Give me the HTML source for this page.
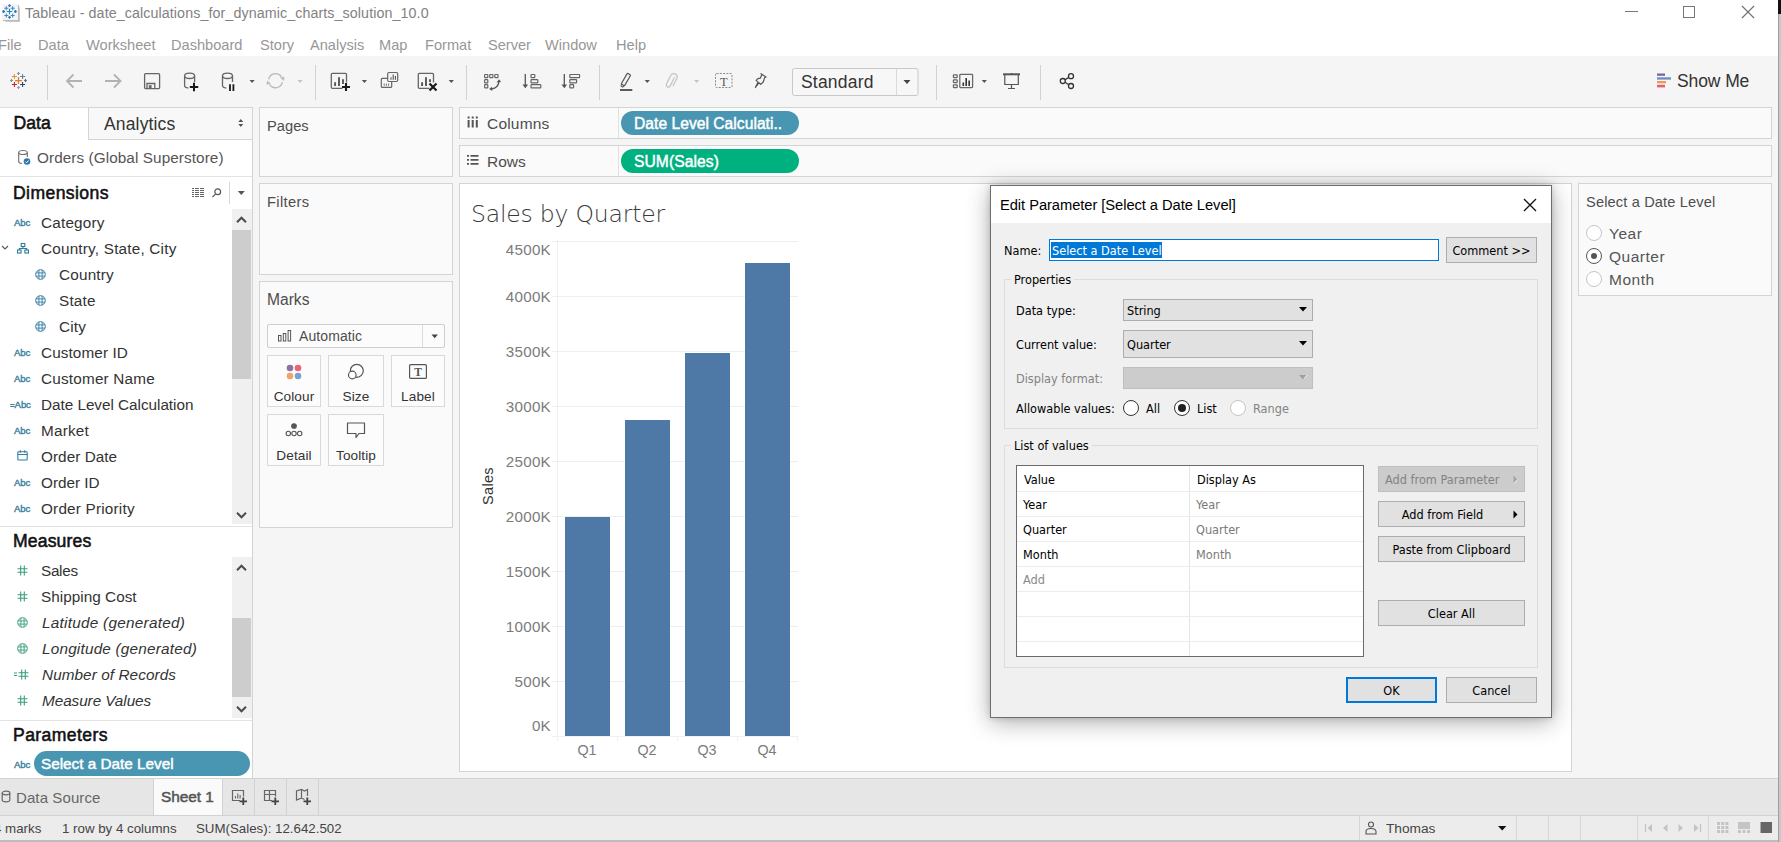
<!DOCTYPE html>
<html lang="en">
<head>
<meta charset="utf-8">
<title>Tableau - date_calculations_for_dynamic_charts_solution_10.0</title>
<style>
*{box-sizing:border-box;margin:0;padding:0}
html,body{width:1781px;height:842px;overflow:hidden;background:#fff}
body{font-family:"Liberation Sans",sans-serif;color:#333;position:relative}
.a{position:absolute}
.t{position:absolute;white-space:nowrap;line-height:20px;height:20px}
.box{position:absolute;background:#fafafa;border:1px solid #d4d4d4}
svg{position:absolute;overflow:visible}
/* menu */
.menu{font-size:14.6px;color:#979797;top:35px}
/* data pane */
.fld{font-size:15.3px;color:#333;letter-spacing:.2px}
.fld.i{font-style:italic;letter-spacing:.3px;margin-left:1px}
.hd{font-size:17.6px;font-weight:normal;color:#111;-webkit-text-stroke:.55px #111;letter-spacing:.4px}
.card{font-size:15px;color:#4d4d4d}
.ax{font-size:15.2px;color:#7b7b7b;letter-spacing:.25px}
/* dialog */
.dlg{font-family:"DejaVu Sans Condensed","DejaVu Sans","Liberation Sans",sans-serif;font-size:12.6px;color:#000}
.btn{position:absolute;background:#e1e1e1;border:1px solid #adadad;text-align:center;font-size:12.6px}
.btn.dis{background:#cccccc;border-color:#bfbfbf;color:#838383}
.cmb{position:absolute;background:#e1e1e1;border:1px solid #adadad}
.grp{position:absolute;border:1px solid #dcdcdc}
.rad{position:absolute;width:16px;height:16px;border-radius:50%;border:1px solid #333;background:#fff}
.rad.on::after{content:"";position:absolute;left:3px;top:3px;width:8px;height:8px;border-radius:50%;background:#222}
.prad{position:absolute;width:16px;height:16px;border-radius:50%;border:1px solid #c6c6c6;background:#fff}
</style>
</head>
<body>
<!-- ===== title bar ===== -->
<div id="titlebar" class="a" style="left:0;top:0;width:1778px;height:56px;background:#fff"></div>
<div class="t" style="left:25px;top:3px;font-size:14.25px;color:#828282;letter-spacing:.1px">Tableau - date_calculations_for_dynamic_charts_solution_10.0</div>
<div class="a" style="left:2px;top:4px;width:16px;height:16px;background:#f4f4f4;box-shadow:1px 1px 0 #b9b9b9,1.5px 1.5px 1px #c9c9c9"></div>
<svg style="left:2px;top:4px" width="16" height="16" viewBox="2 4 16 16" fill="none" stroke="#2f80b8" stroke-width="1.100"><path d="M9.500 8.800v5.400M6.800 11.500h5.400" stroke-width="1.200"/><path d="M6.300 6.300v4M4.300 8.300h4M12.700 6.300v4M10.700 8.300h4M6.300 13.500v4M4.300 15.500h4M12.700 13.500v4M10.700 15.500h4" stroke="#3f8cc2"/><path d="M9.500 4.300v2.800M8.100 5.700h2.800M9.500 16v2.800M8.100 17.400h2.800M3.600 10.100v2.800M2.200 11.500h2.800M15.400 10.100v2.800M14 11.500h2.800" stroke-width="1.300"/></svg>
<!-- ===== menu ===== -->
<div class="t menu" style="left:-2px">File</div>
<div class="t menu" style="left:38px">Data</div>
<div class="t menu" style="left:86px">Worksheet</div>
<div class="t menu" style="left:171px">Dashboard</div>
<div class="t menu" style="left:260px">Story</div>
<div class="t menu" style="left:310px">Analysis</div>
<div class="t menu" style="left:379px">Map</div>
<div class="t menu" style="left:425px">Format</div>
<div class="t menu" style="left:488px">Server</div>
<div class="t menu" style="left:545px">Window</div>
<div class="t menu" style="left:616px">Help</div>
<!-- ===== toolbar + workspace bg ===== -->
<div id="workbg" class="a" style="left:0;top:56px;width:1778px;height:722px;background:#f5f5f5"></div>
<svg id="toolbar" style="left:0;top:57px" width="1778" height="50" viewBox="0 57 1778 50" fill="none" stroke-linecap="butt">
<!-- logo -->
<g stroke-width="1.05">
<path d="M18.500 77v7M15 80.500h7" stroke="#e8762d" stroke-width="1.250"/>
<path d="M14.400 74v5M11.900 76.500h5" stroke="#eb912c"/>
<path d="M22.600 74v5M20.100 76.500h5" stroke="#5b879b"/>
<path d="M14.400 82v5M11.900 84.500h5" stroke="#c72035"/>
<path d="M22.600 82v5M20.100 84.500h5" stroke="#1f447e"/>
<path d="M18.500 72.100v2.800M17.100 73.500h2.800" stroke="#7099a6" stroke-width="1.200"/>
<path d="M18.500 86.100v2.800M17.100 87.500h2.800" stroke="#8d9bb3" stroke-width="1.200"/>
<path d="M11.500 79.100v2.800M10.100 80.500h2.800" stroke="#7099a6" stroke-width="1.200"/>
<path d="M25.500 79.100v2.800M24.100 80.500h2.800" stroke="#5c6692" stroke-width="1.200"/>
</g>
<!-- separators -->
<g stroke="#d2d2d2" stroke-width="1">
<path d="M47.500 65v35M315.500 65v35M466.500 65v35M599.500 65v35M936.500 65v35M1040.500 65v35"/>
</g>
<!-- back / forward -->
<g stroke="#b2b2b2" stroke-width="1.800">
<path d="M67 81h15M73.500 74.500l-6.500 6.500 6.500 6.500"/>
<path d="M105 81h15M114 74.500l6.500 6.500-6.500 6.500"/>
</g>
<!-- save -->
<g stroke="#666" stroke-width="1.300">
<rect x="144.600" y="73.600" width="15" height="15" rx="1"/>
<path d="M147 88.500v-5h7.800v5"/>
<rect x="148.800" y="85.200" width="2.800" height="3.300" fill="#666" stroke="none"/>
</g>
<!-- datasource + -->
<g stroke="#666" stroke-width="1.300">
<ellipse cx="189.600" cy="75.800" rx="5" ry="2.700"/>
<path d="M184.600 75.800v9.700c0 1.300 1.600 2.300 3.800 2.500M194.600 75.800v6.200"/>
<path d="M194 82.800v8.400M189.800 87h8.400" stroke="#1a1a1a" stroke-width="2"/>
</g>
<!-- datasource pause -->
<g stroke="#666" stroke-width="1.300">
<ellipse cx="227.500" cy="75.800" rx="5" ry="2.700"/>
<path d="M222.500 75.800v9.700c0 1.300 1.600 2.300 3.800 2.500M232.500 75.800v6.200"/>
<path d="M230 84.300v6.700M233.400 84.300v6.700" stroke="#1a1a1a" stroke-width="1.800"/>
</g>
<path d="M249.500 80h5.200l-2.600 3z" fill="#555"/>
<!-- refresh disabled -->
<g stroke="#bcbcbc" stroke-width="1.400">
<path d="M268.700 79.300a7 7 0 0 1 12.800-2.400"/>
<path d="M282.300 82.100a7 7 0 0 1 -12.800 2.400"/>
</g>
<path d="M280 77.600l4.500-.9-.6 4.300zM271 83.800l-4.500.9.600-4.300z" fill="#bcbcbc"/>
<path d="M297.500 80h5.200l-2.600 3z" fill="#c4c4c4"/>
<!-- new worksheet -->
<g stroke="#666" stroke-width="1.300">
<path d="M342.500 88.300h-10.200a1 1 0 0 1 -1-1v-13a1 1 0 0 1 1-1h13.200a1 1 0 0 1 1 1v8.200"/>
<path d="M335.100 86v-3.800M339 86v-8.800M343 84v-4.800" stroke="#555" stroke-width="1.900"/>
<path d="M346 83v8M342 87h8" stroke="#1a1a1a" stroke-width="2.100"/>
</g>
<path d="M361.800 80h5.200l-2.600 3z" fill="#555"/>
<!-- duplicate -->
<g stroke="#666" stroke-width="1.200">
<rect x="387.700" y="72.500" width="10" height="9" rx="1.200" />
<path d="M391 79.800v-2.600M393.200 79.800v-5.300M395.400 79.800v-3.800" stroke="#555" stroke-width="1.100"/>
<path d="M387.600 78.400h-5.300a1 1 0 0 0 -1 1v7a1 1 0 0 0 1 1h8.400a1 1 0 0 0 1-1v-4.800"/>
<path d="M384.200 85.800v-2.200M386.400 85.800v-2.200M388.600 85.800v-2.200" stroke="#666" stroke-width=".9"/>
</g>
<!-- clear sheet -->
<g stroke="#666" stroke-width="1.300">
<path d="M429.500 88.300h-10.200a1 1 0 0 1 -1-1v-13a1 1 0 0 1 1-1h13.200a1 1 0 0 1 1 1v8.200"/>
<path d="M422.100 86v-3.800M426 86v-8.800M430 82v-2.800" stroke="#555" stroke-width="1.900"/>
<path d="M429.500 83.500l7 7M436.500 83.500l-7 7" stroke="#1a1a1a" stroke-width="2.200"/>
</g>
<path d="M448.700 80h5.200l-2.600 3z" fill="#555"/>
<!-- swap -->
<g stroke="#666" stroke-width="1.200">
<rect x="484.600" y="74.500" width="3.200" height="3.200" rx=".6"/><rect x="489.700" y="74.500" width="3.200" height="3.200" rx=".6"/><rect x="494.800" y="74.500" width="3.200" height="3.200" rx=".6"/>
<rect x="484.600" y="79.600" width="3.200" height="3.200" rx=".6"/><rect x="484.600" y="84.700" width="3.200" height="3.200" rx=".6"/>
<path d="M491.800 88.800q6.200 -.6 7.100 -7" stroke="#555" stroke-width="1.300"/>
<path d="M499 79.300l2.100 2.700-4.500.6zM489.100 89.100l3-2.400.2 4.300z" fill="#555" stroke="none"/>
</g>
<!-- sort asc -->
<g stroke="#666" stroke-width="1.200">
<path d="M525.300 74v11.500" stroke="#555" stroke-width="1.300"/>
<path d="M522.500 84.400h5.600l-2.800 3.800z" fill="#555" stroke="none"/>
<rect x="531" y="74.500" width="3.800" height="3.200" rx=".6"/><rect x="531" y="79.600" width="6.800" height="3.200" rx=".6"/><rect x="531" y="84.700" width="9.800" height="3.200" rx=".6"/>
</g>
<!-- sort desc -->
<g stroke="#666" stroke-width="1.200">
<path d="M564.300 74v11.500" stroke="#555" stroke-width="1.300"/>
<path d="M561.500 84.400h5.600l-2.800 3.800z" fill="#555" stroke="none"/>
<rect x="569.800" y="74.500" width="9.800" height="3.200" rx=".6"/><rect x="569.800" y="79.600" width="6.800" height="3.200" rx=".6"/><rect x="569.800" y="84.700" width="3.800" height="3.200" rx=".6"/>
</g>
<!-- highlighter -->
<g stroke="#555" stroke-width="1.200" transform="translate(625.900 79.600) rotate(30)">
<rect x="-1.900" y="-6.300" width="3.800" height="12.400" rx=".8"/>
<path d="M-1.500 6.100l.5 2h2l.5-2" stroke-width="1"/>
</g>
<path d="M620 90h12.300" stroke="#4a4a4a" stroke-width="1.800"/>
<path d="M644.700 80h5.200l-2.600 3z" fill="#555"/>
<!-- paperclip disabled -->
<g stroke="#c2c2c2" stroke-width="1.200">
<path d="M674.300 77.500l-4 8.300c-.8 1.600 -2.800 1.600 -3.600 .6 -.7 -.8 -.5 -1.800 0 -2.800l4 -8c1.200 -2.300 3.700 -2.500 5.200 -1.400 1.400 1.100 1.500 2.900 .7 4.500l-3.600 7.200"/>
</g>
<path d="M694 80h5.200l-2.600 3z" fill="#c4c4c4"/>
<!-- T box -->
<rect x="715.500" y="73.500" width="16.500" height="14" rx="1" stroke="#8a8a8a" stroke-width="1" stroke-dasharray="2 1.300"/>
<text x="723.700" y="85.500" font-family="Liberation Serif,serif" font-size="12.500" fill="#555" text-anchor="middle" stroke="none">T</text>
<!-- pin -->
<g stroke="#555" stroke-width="1.200" stroke-linejoin="round">
<path d="M761 73.700l5 3.300 -1.500 .8 -1.200 4.200 -2.600 2.400 -1.800 -1.600 -3.500 4.700 .4 -.9 2.300 -4.500 -2 -1.700 1.800 -1.800 2.400 -.4 1.500 -3.500z"/>
</g>
<!-- Standard combo -->
<rect x="792.500" y="68.500" width="125.500" height="27" rx="2" fill="#f7f7f7" stroke="#c8c8c8" stroke-width="1"/>
<path d="M896.500 69v26" stroke="#dadada"/>
<path d="M903.500 80h7l-3.500 4z" fill="#444"/>
<!-- show cards -->
<g stroke="#666" stroke-width="1.250">
<rect x="953.400" y="74.800" width="3.800" height="2.800" rx=".5"/><rect x="953.400" y="79.800" width="3.800" height="2.800" rx=".5"/><rect x="953.400" y="84.800" width="3.800" height="2.800" rx=".5"/>
<rect x="959.800" y="74.300" width="12.800" height="13.300" rx=".8"/>
<path d="M963.300 86v-3.500M966.200 86v-8M969.200 86v-5.500" stroke="#333" stroke-width="1.600"/>
</g>
<path d="M981.700 80h5.200l-2.600 3z" fill="#555"/>
<!-- presentation -->
<g stroke="#555" stroke-width="1.200">
<path d="M1003 74.300h17" stroke-width="2"/>
<path d="M1004.800 75v9.500h13.500v-9.500M1011.500 73v1.500M1011.500 84.500v4M1008 88.500h7"/>
</g>
<!-- share -->
<g stroke="#333" stroke-width="1.300">
<circle cx="1062.800" cy="81" r="2.500"/><circle cx="1071" cy="76.200" r="2.500"/><circle cx="1071" cy="86" r="2.500"/>
<path d="M1065 79.700l3.800 -2.300M1065 82.300l3.800 2.400"/>
</g>
<!-- show me icon -->
<rect x="1657" y="73.500" width="8" height="2.300" fill="#7b66a0"/>
<rect x="1657" y="77.300" width="14" height="2.300" fill="#6b8fc0"/>
<rect x="1657" y="81" width="9" height="2.300" fill="#f09a4f"/>
<rect x="1657" y="84.800" width="8" height="2.600" fill="#e8606e"/>
</svg>
<div class="t" style="left:801px;top:72px;font-size:17.5px;color:#333;letter-spacing:.2px">Standard</div>
<div class="t" style="left:1677px;top:71px;font-size:17.5px;color:#333;letter-spacing:-.1px">Show Me</div>
<!--/TOOLBAR-->
<!--DATAPANE-->
<div class="a" style="left:0;top:107px;width:252px;height:671px;background:#fff;border-top:1px solid #e0e0e0"></div>
<div class="a" style="left:88px;top:107px;width:165px;height:33px;background:#f8f8f8;border-left:1px solid #d4d4d4;border-bottom:1px solid #d4d4d4;border-top:1px solid #d4d4d4"></div>
<div class="a" style="left:252px;top:107px;width:1px;height:671px;background:#d4d4d4"></div>
<div class="t hd" style="left:13.500px;top:113px;letter-spacing:0">Data</div>
<div class="t" style="left:104px;top:114px;font-size:17.5px;color:#333;letter-spacing:.15px">Analytics</div>
<svg style="left:237px;top:118px" width="8" height="10" viewBox="0 0 8 10"><path d="M1.300 4l2.500-3 2.500 3zM1.300 6l2.500 3 2.500-3z" fill="#555"/></svg>
<svg style="left:17px;top:149px" width="16" height="17" viewBox="0 0 16 17" fill="none" stroke="#6f6f6f" stroke-width="1.100"><ellipse cx="6" cy="3.500" rx="4.300" ry="2"/><path d="M1.700 3.500v9c0 1 1.500 1.800 3.300 2M10.300 3.500v4.500"/><circle cx="10" cy="12.500" r="3.300" fill="#2a7ab0" stroke="none"/><path d="M8.400 12.600l1.200 1.200 2-2.300" stroke="#fff" stroke-width="1"/></svg>
<div class="t fld" style="left:37px;top:148px;color:#555;letter-spacing:.08px">Orders (Global Superstore)</div>
<div class="a" style="left:0;top:176px;width:252px;height:1px;background:#e3e3e3"></div>
<div class="t hd" style="left:13px;top:183px">Dimensions</div>
<svg style="left:192px;top:188px" width="12" height="9" viewBox="0 0 12 9" fill="#666"><rect x="0" y="0" width="2" height="1"/><rect x="3" y="0" width="4" height="1"/><rect x="8" y="0" width="4" height="1"/><rect x="0" y="2" width="2" height="1"/><rect x="3" y="2" width="4" height="1"/><rect x="8" y="2" width="4" height="1"/><rect x="0" y="4" width="2" height="1"/><rect x="3" y="4" width="4" height="1"/><rect x="8" y="4" width="4" height="1"/><rect x="0" y="6" width="2" height="1"/><rect x="3" y="6" width="4" height="1"/><rect x="8" y="6" width="4" height="1"/><rect x="0" y="8" width="2" height="1"/><rect x="3" y="8" width="4" height="1"/><rect x="8" y="8" width="4" height="1"/></svg>
<svg style="left:210.700px;top:186.700px" width="12" height="12" viewBox="0 0 12 12" stroke="#555" stroke-width="1.200" fill="none"><circle cx="6.700" cy="4.800" r="2.900"/><path d="M4.600 6.900l-3.200 3.300"/></svg>
<div class="a" style="left:229px;top:182px;width:1px;height:22px;background:#d8d8d8"></div>
<svg style="left:237px;top:190px" width="9" height="6" viewBox="0 0 9 6"><path d="M.800 1h7l-3.500 4z" fill="#555"/></svg>
<div class="t" style="left:14px;top:213px;font-size:9.600px;font-weight:normal;color:#3b7f9e;-webkit-text-stroke:.4px #3b7f9e;letter-spacing:-.1px;transform:scaleY(1)">Abc</div>
<div class="t fld" style="left:41px;top:213px">Category</div>
<svg style="left:1.300px;top:245.300px" width="8" height="6" viewBox="0 0 8 6" fill="none" stroke="#555" stroke-width="1.100"><path d="M1 1l3 3 3-3"/></svg>
<svg style="left:16.600px;top:243px" width="12" height="11" viewBox="0 0 12 11" fill="none" stroke="#2f7c9f" stroke-width="1.100"><rect x="4.200" y=".5" width="3.600" height="3"/><rect x=".5" y="7" width="3.600" height="3"/><rect x="7.900" y="7" width="3.600" height="3"/><path d="M6 3.500v2M2.300 7v-1.500h7.400v1.500"/></svg>
<div class="t fld" style="left:41px;top:239px">Country, State, City</div>
<svg style="left:35px;top:269px" width="11" height="11" viewBox="0 0 11 11" fill="none" stroke="#2f7c9f" stroke-width="1"><circle cx="5.500" cy="5.500" r="4.800"/><path d="M3.900 1.100v8.800M7.100 1.100v8.800M1.100 3.900h8.800M1.100 7.100h8.800" stroke-width=".9"/></svg>
<div class="t fld" style="left:59px;top:265px">Country</div>
<svg style="left:35px;top:295px" width="11" height="11" viewBox="0 0 11 11" fill="none" stroke="#2f7c9f" stroke-width="1"><circle cx="5.500" cy="5.500" r="4.800"/><path d="M3.900 1.100v8.800M7.100 1.100v8.800M1.100 3.900h8.800M1.100 7.100h8.800" stroke-width=".9"/></svg>
<div class="t fld" style="left:59px;top:291px">State</div>
<svg style="left:35px;top:321px" width="11" height="11" viewBox="0 0 11 11" fill="none" stroke="#2f7c9f" stroke-width="1"><circle cx="5.500" cy="5.500" r="4.800"/><path d="M3.900 1.100v8.800M7.100 1.100v8.800M1.100 3.900h8.800M1.100 7.100h8.800" stroke-width=".9"/></svg>
<div class="t fld" style="left:59px;top:317px">City</div>
<div class="t" style="left:14px;top:343px;font-size:9.600px;font-weight:normal;color:#3b7f9e;-webkit-text-stroke:.4px #3b7f9e;letter-spacing:-.1px;transform:scaleY(1)">Abc</div>
<div class="t fld" style="left:41px;top:343px;letter-spacing:.1px">Customer ID</div>
<div class="t" style="left:14px;top:369px;font-size:9.600px;font-weight:normal;color:#3b7f9e;-webkit-text-stroke:.4px #3b7f9e;letter-spacing:-.1px;transform:scaleY(1)">Abc</div>
<div class="t fld" style="left:41px;top:369px">Customer Name</div>
<div class="t" style="left:10px;top:395px;font-size:9.600px;font-weight:normal;color:#3b7f9e;-webkit-text-stroke:.4px #3b7f9e;letter-spacing:-.1px;transform:scaleY(1)"><span style="font-size:8px">=</span>Abc</div>
<div class="t fld" style="left:41px;top:395px;letter-spacing:-.03px">Date Level Calculation</div>
<div class="t" style="left:14px;top:421px;font-size:9.600px;font-weight:normal;color:#3b7f9e;-webkit-text-stroke:.4px #3b7f9e;letter-spacing:-.1px;transform:scaleY(1)">Abc</div>
<div class="t fld" style="left:41px;top:421px">Market</div>
<svg style="left:17px;top:450px" width="11" height="11" viewBox="0 0 11 11" fill="none" stroke="#2f7c9f" stroke-width="1.100"><rect x=".800" y="1.800" width="9.400" height="8.200" rx=".8"/><path d="M.800 4.500h9.400M3.300 .3v2.500M7.700 .3v2.500"/></svg>
<div class="t fld" style="left:41px;top:447px;letter-spacing:.05px">Order Date</div>
<div class="t" style="left:14px;top:473px;font-size:9.600px;font-weight:normal;color:#3b7f9e;-webkit-text-stroke:.4px #3b7f9e;letter-spacing:-.1px;transform:scaleY(1)">Abc</div>
<div class="t fld" style="left:41px;top:473px;letter-spacing:0px">Order ID</div>
<div class="t" style="left:14px;top:499px;font-size:9.600px;font-weight:normal;color:#3b7f9e;-webkit-text-stroke:.4px #3b7f9e;letter-spacing:-.1px;transform:scaleY(1)">Abc</div>
<div class="t fld" style="left:41px;top:499px">Order Priority</div>
<div class="a" style="left:232px;top:209px;width:20px;height:315px;background:#f0f0f0"></div>
<div class="a" style="left:232px;top:230px;width:19px;height:149px;background:#cdcdcd"></div>
<svg style="left:236px;top:216px" width="11" height="7" viewBox="0 0 11 7" fill="none" stroke="#4a4a4a" stroke-width="2"><path d="M1 6.200l4.500-4.500 4.500 4.500"/></svg>
<svg style="left:236px;top:512px" width="11" height="7" viewBox="0 0 11 7" fill="none" stroke="#4a4a4a" stroke-width="2"><path d="M1 .8l4.500 4.500 4.500-4.500"/></svg>
<div class="a" style="left:0;top:526px;width:252px;height:1px;background:#e3e3e3"></div>
<div class="t hd" style="left:13px;top:531px;letter-spacing:.15px">Measures</div>
<svg style="left:17px;top:565px" width="11" height="11" viewBox="0 0 11 11" fill="none" stroke="#3a9e7a" stroke-width="1.100"><path d="M3.700 .5v10M7.300 .5v10M.5 3.700h10M.5 7.300h10"/></svg>
<div class="t fld" style="left:41px;top:561px;letter-spacing:-.3px">Sales</div>
<svg style="left:17px;top:591px" width="11" height="11" viewBox="0 0 11 11" fill="none" stroke="#3a9e7a" stroke-width="1.100"><path d="M3.700 .5v10M7.300 .5v10M.5 3.700h10M.5 7.300h10"/></svg>
<div class="t fld" style="left:41px;top:587px;letter-spacing:.03px">Shipping Cost</div>
<svg style="left:17px;top:617px" width="11" height="11" viewBox="0 0 11 11" fill="none" stroke="#3a9e7a" stroke-width="1"><circle cx="5.500" cy="5.500" r="4.800"/><path d="M3.900 1.100v8.800M7.100 1.100v8.800M1.100 3.900h8.800M1.100 7.100h8.800" stroke-width=".9"/></svg>
<div class="t fld i" style="left:41px;top:613px;letter-spacing:.27px">Latitude (generated)</div>
<svg style="left:17px;top:643px" width="11" height="11" viewBox="0 0 11 11" fill="none" stroke="#3a9e7a" stroke-width="1"><circle cx="5.500" cy="5.500" r="4.800"/><path d="M3.900 1.100v8.800M7.100 1.100v8.800M1.100 3.900h8.800M1.100 7.100h8.800" stroke-width=".9"/></svg>
<div class="t fld i" style="left:41px;top:639px;letter-spacing:.21px">Longitude (generated)</div>
<svg style="left:18px;top:669px" width="11" height="11" viewBox="0 0 11 11" fill="none" stroke="#3a9e7a" stroke-width="1.100"><path d="M3.700 .5v10M7.300 .5v10M.5 3.700h10M.5 7.300h10"/></svg><svg style="left:14px;top:672px" width="4" height="5" viewBox="0 0 4 5" stroke="#3a9e7a" stroke-width="1"><path d="M0 1h3M0 3.500h3"/></svg>
<div class="t fld i" style="left:41px;top:665px;letter-spacing:.08px">Number of Records</div>
<svg style="left:17px;top:695px" width="11" height="11" viewBox="0 0 11 11" fill="none" stroke="#3a9e7a" stroke-width="1.100"><path d="M3.700 .5v10M7.300 .5v10M.5 3.700h10M.5 7.300h10"/></svg>
<div class="t fld i" style="left:41px;top:691px;letter-spacing:-.06px">Measure Values</div>
<div class="a" style="left:232px;top:557px;width:20px;height:161px;background:#f0f0f0"></div>
<div class="a" style="left:232px;top:618px;width:19px;height:79px;background:#cdcdcd"></div>
<svg style="left:236px;top:564px" width="11" height="7" viewBox="0 0 11 7" fill="none" stroke="#4a4a4a" stroke-width="2"><path d="M1 6.200l4.500-4.500 4.500 4.500"/></svg>
<svg style="left:236px;top:706px" width="11" height="7" viewBox="0 0 11 7" fill="none" stroke="#4a4a4a" stroke-width="2"><path d="M1 .8l4.500 4.500 4.500-4.500"/></svg>
<div class="a" style="left:0;top:720px;width:252px;height:1px;background:#e3e3e3"></div>
<div class="t hd" style="left:13px;top:725px">Parameters</div>
<div class="t" style="left:14px;top:755px;font-size:9.600px;font-weight:normal;color:#3b7f9e;-webkit-text-stroke:.4px #3b7f9e;letter-spacing:-.1px;transform:scaleY(1)">Abc</div>
<div class="a" style="left:34px;top:751px;width:216px;height:25px;border-radius:12.500px;background:#4996b2"></div>
<div class="t" style="left:41px;top:754px;font-size:15.3px;font-weight:normal;-webkit-text-stroke:.45px #fff;color:#fff;letter-spacing:0">Select a Date Level</div>
<!--/DATAPANE-->
<!--CARDS-->
<div class="box" style="left:259px;top:107px;width:194px;height:70px"></div>
<div class="t card" style="left:267px;top:116px;font-size:14.7px">Pages</div>
<div class="box" style="left:259px;top:183px;width:194px;height:92px"></div>
<div class="t card" style="left:267px;top:192px;font-size:14.7px;letter-spacing:.35px">Filters</div>
<div class="box" style="left:259px;top:281px;width:194px;height:247px"></div>
<div class="t card" style="left:267px;top:290px;font-size:15.6px">Marks</div>
<!-- mark type dropdown -->
<div class="a" style="left:267px;top:324px;width:178px;height:24px;background:#fcfcfc;border:1px solid #cfcfcf;border-radius:2px"></div>
<div class="a" style="left:422px;top:325px;width:1px;height:22px;background:#dcdcdc"></div>
<svg style="left:431px;top:334px" width="8" height="5" viewBox="0 0 8 5"><path d="M.500 .5h6.400l-3.200 3.800z" fill="#444"/></svg>
<svg style="left:278px;top:330px" width="14" height="12" viewBox="0 0 14 12" fill="none" stroke="#555" stroke-width="1"><rect x=".5" y="5.500" width="2.500" height="5.500"/><rect x="5.300" y="3.500" width="2.500" height="7.500"/><rect x="10.100" y=".5" width="2.500" height="10.500"/></svg>
<div class="t" style="left:299px;top:326px;font-size:14px;color:#4d4d4d;letter-spacing:.1px">Automatic</div>
<!-- mark buttons -->
<div class="a mb" style="left:267px;top:355px;width:54px;height:52px"></div>
<div class="a mb" style="left:328px;top:355px;width:56px;height:52px"></div>
<div class="a mb" style="left:391px;top:355px;width:54px;height:52px"></div>
<div class="a mb" style="left:267px;top:414px;width:54px;height:52px"></div>
<div class="a mb" style="left:328px;top:414px;width:56px;height:52px"></div>
<style>.mb{background:#fcfcfc;border:1px solid #d9d9d9}.ml{font-size:13.6px;letter-spacing:.1px;color:#333;text-align:center}</style>
<div class="t ml" style="left:267px;top:387px;width:54px">Colour</div>
<div class="t ml" style="left:328px;top:387px;width:56px">Size</div>
<div class="t ml" style="left:391px;top:387px;width:54px">Label</div>
<div class="t ml" style="left:267px;top:446px;width:54px">Detail</div>
<div class="t ml" style="left:328px;top:446px;width:56px">Tooltip</div>
<!-- colour icon -->
<svg style="left:285px;top:363px" width="18" height="18" viewBox="0 0 18 18"><circle cx="5" cy="5" r="3.300" fill="#8874a6"/><circle cx="13" cy="5" r="3.300" fill="#ee6275"/><circle cx="5" cy="13" r="3.300" fill="#f3a26c"/><circle cx="13" cy="13" r="3.300" fill="#79a1d0"/></svg>
<!-- size icon -->
<svg style="left:346px;top:362px" width="20" height="20" viewBox="0 0 20 20" fill="none" stroke="#555" stroke-width="1.200"><circle cx="10.800" cy="8.800" r="6.500"/><circle cx="6.300" cy="13" r="3.800" fill="#fff"/></svg>
<!-- label icon -->
<svg style="left:409px;top:364px" width="18" height="15" viewBox="0 0 18 15" fill="none" stroke="#555" stroke-width="1.200"><rect x=".600" y=".600" width="16.800" height="13.800" rx="1"/><text x="9" y="12" font-family="Liberation Serif,serif" font-weight="bold" font-size="11.500" fill="#555" stroke="none" text-anchor="middle">T</text></svg>
<!-- detail icon -->
<svg style="left:285px;top:423px" width="18" height="14" viewBox="0 0 18 14" fill="none" stroke="#555" stroke-width="1.100"><circle cx="9" cy="3" r="2.300" fill="#555"/><circle cx="3.300" cy="10.500" r="2.200"/><circle cx="9" cy="10.500" r="2.200"/><circle cx="14.700" cy="10.500" r="2.200"/></svg>
<!-- tooltip icon -->
<svg style="left:346px;top:422px" width="20" height="18" viewBox="0 0 20 18" fill="none" stroke="#555" stroke-width="1.200" stroke-linejoin="round"><path d="M1.500 1h17v10.500h-5.500l-3 4v-4h-8.500z"/></svg>
<!-- shelves -->
<div class="box" style="left:459px;top:107px;width:1313px;height:32px"></div>
<div class="box" style="left:459px;top:145px;width:1313px;height:32px"></div>
<div class="a" style="left:618px;top:108px;width:1px;height:30px;background:#e0e0e0"></div>
<div class="a" style="left:618px;top:146px;width:1px;height:30px;background:#e0e0e0"></div>
<svg style="left:467px;top:116px" width="12" height="12" viewBox="0 0 12 12" stroke="#555" stroke-width="2" fill="none"><path d="M1.600 4v7.500M5.700 4v7.500M9.800 4v7.500"/><path d="M1.600 .5v2M5.700 .5v2M9.800 .5v2"/></svg>
<svg style="left:467px;top:154px" width="12" height="12" viewBox="0 0 12 12" stroke="#555" stroke-width="1.700" fill="none"><path d="M3.500 1.800h8M3.500 5.800h8M3.500 9.800h8"/><path d="M0 1.800h2M0 5.800h2M0 9.800h2"/></svg>
<div class="t card" style="left:487px;top:114px;font-size:15.500px;letter-spacing:.2px">Columns</div>
<div class="t card" style="left:487px;top:152px;font-size:15.500px;letter-spacing:0">Rows</div>
<div class="a" style="left:621px;top:111px;width:178px;height:24px;border-radius:12px;background:#4996b2"></div>
<div class="a" style="left:621px;top:149px;width:178px;height:24px;border-radius:12px;background:#00b180"></div>
<div class="t" style="left:634px;top:114px;font-size:15.6px;font-weight:normal;-webkit-text-stroke:.45px #fff;color:#fff;letter-spacing:.04px">Date Level Calculati..</div>
<div class="t" style="left:634px;top:152px;font-size:15.6px;font-weight:normal;-webkit-text-stroke:.45px #fff;color:#fff;letter-spacing:.1px">SUM(Sales)</div>
<!-- parameter control card -->
<div class="box" style="left:1578px;top:183px;width:194px;height:113px"></div>
<div class="t" style="left:1586px;top:192px;font-size:14.6px;color:#4d4d4d;letter-spacing:.15px">Select a Date Level</div>
<div class="prad" style="left:1586px;top:225px"></div>
<div class="prad" style="left:1586px;top:248px;border-color:#555;border-width:1.500px"></div>
<div class="a" style="left:1591px;top:253px;width:6px;height:6px;border-radius:50%;background:#555"></div>
<div class="prad" style="left:1586px;top:271px"></div>
<div class="t" style="left:1609px;top:224px;font-size:15.500px;color:#555;letter-spacing:.5px">Year</div>
<div class="t" style="left:1609px;top:247px;font-size:15.500px;color:#555;letter-spacing:.5px">Quarter</div>
<div class="t" style="left:1609px;top:270px;font-size:15.500px;color:#555;letter-spacing:.5px">Month</div>
<!--/CARDS-->
<!--VIEW-->
<div class="a" style="left:459px;top:183px;width:1113px;height:589px;background:#fff;border:1px solid #d4d4d4"></div>
<div class="t" style="left:471px;top:198px;height:32px;line-height:32px;font-family:'DejaVu Sans Light','DejaVu Sans','Liberation Sans',sans-serif;font-weight:200;font-size:23.500px;color:#3a3a3a;letter-spacing:-.2px">Sales by Quarter</div>
<svg style="left:459px;top:183px" width="1113" height="589" viewBox="459 183 1113 589">
<g stroke="#efefef" stroke-width="1">
<path d="M552 241.500h246M552 296.500h246M552 351.500h246M552 406.500h246M552 461.500h246M552 516.500h246M552 571.500h246M552 626.500h246M552 681.500h246"/>
<path d="M557.500 239v502M617.500 736v5M677.500 736v5M737.500 736v5M797.500 736v5M552 736.500h246" stroke="#f0f0f0"/>
</g>
<g fill="#4e79a7">
<rect x="565" y="517" width="45" height="219"/>
<rect x="625" y="420" width="45" height="316"/>
<rect x="685" y="353" width="45" height="383"/>
<rect x="745" y="263" width="45" height="473"/>
</g>
</svg>
<style>.yl{width:60px;text-align:right;left:491px}.xl{width:60px;text-align:center;font-size:14.3px;letter-spacing:0}</style>
<div class="t ax yl" style="top:240px">4500K</div>
<div class="t ax yl" style="top:287px">4000K</div>
<div class="t ax yl" style="top:342px">3500K</div>
<div class="t ax yl" style="top:397px">3000K</div>
<div class="t ax yl" style="top:452px">2500K</div>
<div class="t ax yl" style="top:507px">2000K</div>
<div class="t ax yl" style="top:562px">1500K</div>
<div class="t ax yl" style="top:617px">1000K</div>
<div class="t ax yl" style="top:672px">500K</div>
<div class="t ax yl" style="top:716px">0K</div>
<div class="t ax xl" style="left:557px;top:740px">Q1</div>
<div class="t ax xl" style="left:617px;top:740px">Q2</div>
<div class="t ax xl" style="left:677px;top:740px">Q3</div>
<div class="t ax xl" style="left:737px;top:740px">Q4</div>
<div class="t" style="left:458px;top:476px;width:60px;text-align:center;font-size:14.500px;color:#333;letter-spacing:.3px;transform:rotate(-90deg)">Sales</div>
<!--/VIEW-->
<!--BOTTOM-->
<div class="a" style="left:0;top:778px;width:1778px;height:38px;background:#e6e6e6;border-top:1px solid #d2d2d2;border-bottom:1px solid #d2d2d2"></div>
<div class="a" style="left:153px;top:779px;width:70px;height:36px;background:#fafafa;border-left:1px solid #d2d2d2;border-right:1px solid #d2d2d2"></div>
<div class="a" style="left:254px;top:779px;width:1px;height:36px;background:#d2d2d2"></div>
<div class="a" style="left:286px;top:779px;width:1px;height:36px;background:#d2d2d2"></div>
<div class="a" style="left:318px;top:779px;width:1px;height:36px;background:#d2d2d2"></div>
<svg style="left:1px;top:790px" width="10" height="13" viewBox="0 0 10 13" fill="none" stroke="#666" stroke-width="1.200"><ellipse cx="5" cy="3" rx="3.800" ry="1.800"/><path d="M1.200 3v7c0 1 1.700 1.800 3.800 1.800s3.800-.8 3.800-1.800v-7"/></svg>
<div class="t" style="left:16px;top:788px;font-size:15px;color:#666;letter-spacing:.1px">Data Source</div>
<div class="t" style="left:161px;top:787px;font-size:15.4px;font-weight:normal;-webkit-text-stroke:.5px #555;color:#555;letter-spacing:-.05px">Sheet 1</div>
<svg style="left:231px;top:789px" width="17" height="17" viewBox="0 0 17 17" fill="none" stroke="#666" stroke-width="1.200"><path d="M9 11.500h-7.500v-10h11v6"/><path d="M4.500 9.500v-2.500M6.800 9.500v-5M9.100 9.500v-3.500" stroke-width="1.100"/><path d="M12.300 8.500v7.500M8.500 12.300h7.500" stroke="#444" stroke-width="1.800"/></svg>
<svg style="left:263px;top:789px" width="17" height="17" viewBox="0 0 17 17" fill="none" stroke="#666" stroke-width="1.200"><path d="M9 11.500h-7.500v-10h11v6M1.500 5.500h11M6.500 1.500v10"/><path d="M12.300 8.500v7.500M8.500 12.300h7.500" stroke="#444" stroke-width="1.800"/></svg>
<svg style="left:295px;top:789px" width="17" height="17" viewBox="0 0 17 17" fill="none" stroke="#666" stroke-width="1.200"><path d="M9.500 10.500l-3-1.500-5 2v-9l5-1.500 3 1.500 3-1.500v6.500M6.500 .5v8.500"/><path d="M12.300 8.500v7.500M8.500 12.300h7.500" stroke="#444" stroke-width="1.800"/></svg>
<!-- status bar -->
<div class="a" style="left:0;top:816px;width:1778px;height:25px;background:#ececec"></div>
<div class="a" style="left:0;top:840px;width:1778px;height:2px;background:#bdbdbd"></div>
<div class="t sb" style="left:-6px;top:819px">4 marks</div>
<div class="t sb" style="left:62px;top:819px">1 row by 4 columns</div>
<div class="t sb" style="left:196px;top:819px">SUM(Sales): 12.642.502</div>
<style>.sb{font-size:13.3px;color:#444}.vs{position:absolute;top:816px;width:1px;height:24px;background:#d6d6d6}</style>
<div class="vs" style="left:1359px"></div><div class="vs" style="left:1516px"></div><div class="vs" style="left:1548px"></div><div class="vs" style="left:1580px"></div><div class="vs" style="left:1637px"></div><div class="vs" style="left:1708px"></div>
<svg style="left:1365px;top:821px" width="12" height="14" viewBox="0 0 12 14" fill="none" stroke="#555" stroke-width="1.100"><circle cx="6" cy="3.500" r="2.500"/><path d="M1 13v-2.500c0-2 2-3 5-3s5 1 5 3v2.500z"/></svg>
<div class="t sb" style="left:1386px;top:819px;font-size:13.7px">Thomas</div>
<svg style="left:1498px;top:826px" width="9" height="5" viewBox="0 0 9 5"><path d="M0 0h8.400l-4.200 4.600z" fill="#111"/></svg>
<svg style="left:1644px;top:822px" width="60" height="12" viewBox="1644 822 60 12" fill="#c3c3c3" stroke="#c3c3c3" stroke-width="1.200"><path d="M1645.500 824v8" fill="none"/><path d="M1652 824v8l-4.500-4z" stroke="none"/><path d="M1667.500 824v8l-4.500-4z" stroke="none"/><path d="M1678.500 824v8l4.500-4z" stroke="none"/><path d="M1694 824v8l4.500-4z" stroke="none"/><path d="M1700.500 824v8" fill="none"/></svg>
<svg style="left:1717px;top:822px" width="56" height="11" viewBox="1717 822 56 11"><g fill="#c4c4c4"><rect x="1717" y="822" width="3" height="3"/><rect x="1721.200" y="822" width="3" height="3"/><rect x="1725.400" y="822" width="3" height="3"/><rect x="1717" y="826" width="3" height="3"/><rect x="1721.200" y="826" width="3" height="3"/><rect x="1725.400" y="826" width="3" height="3"/><rect x="1717" y="830" width="3" height="3"/><rect x="1721.200" y="830" width="3" height="3"/><rect x="1725.400" y="830" width="3" height="3"/>
<rect x="1738" y="822" width="12" height="7"/><rect x="1738" y="830" width="3" height="3"/><rect x="1742.500" y="830" width="3" height="3"/><rect x="1747" y="830" width="3" height="3"/></g><rect x="1760.500" y="822" width="11.500" height="11" fill="#666"/></svg>
<!--/BOTTOM-->
<!--DIALOG-->
<div id="dlg" class="a dlg" style="left:990px;top:185px;width:562px;height:533px;background:#f0f0f0;border:1px solid #6d6d6d;box-shadow:0 4px 22px rgba(0,0,0,.32),0 0 6px rgba(0,0,0,.16)">
<div class="a" style="left:0;top:0;width:560px;height:37px;background:#fff"></div>
<div class="t" style="left:9px;top:9px;font-family:'Liberation Sans',sans-serif;font-size:14.7px;color:#000;letter-spacing:-.05px">Edit Parameter [Select a Date Level]</div>
<svg style="left:532px;top:12px" width="14" height="14" viewBox="0 0 14 14" stroke="#111" stroke-width="1.300" fill="none"><path d="M1 1l12 12M13 1l-12 12"/></svg>
<div class="t" style="left:13px;top:55px">Name:</div>
<div class="a" style="left:58px;top:53px;width:390px;height:22px;background:#fff;border:1px solid #0078d7"></div>
<div class="a" style="left:60px;top:56px;width:111px;height:16px;background:#0078d7"></div>
<div class="t" style="left:61px;top:55px;color:#fff">Select a Date Level</div>
<div class="btn" style="left:455px;top:51px;width:91px;height:26px;line-height:26px">Comment &gt;&gt;</div>
<!-- properties -->
<div class="grp" style="left:13px;top:93px;width:534px;height:150px"></div>
<div class="t" style="left:20px;top:84px;background:#f0f0f0;padding:0 3px">Properties</div>
<div class="t" style="left:25px;top:115px">Data type:</div>
<div class="cmb" style="left:132px;top:113px;width:190px;height:22px"></div>
<div class="t" style="left:136px;top:115px">String</div>
<svg style="left:308px;top:121px" width="9" height="5" viewBox="0 0 9 5"><path d="M0 0h8l-4 4.500z" fill="#000"/></svg>
<div class="t" style="left:25px;top:149px">Current value:</div>
<div class="cmb" style="left:132px;top:144px;width:190px;height:28px"></div>
<div class="t" style="left:136px;top:149px">Quarter</div>
<svg style="left:308px;top:155px" width="9" height="5" viewBox="0 0 9 5"><path d="M0 0h8l-4 4.500z" fill="#000"/></svg>
<div class="t" style="left:25px;top:183px;color:#838383">Display format:</div>
<div class="cmb" style="left:132px;top:181px;width:190px;height:22px;background:#cccccc;border-color:#bfbfbf"></div>
<svg style="left:308px;top:189px" width="9" height="5" viewBox="0 0 9 5"><path d="M0 0h8l-4 4.500z" fill="#a0a0a0"/><path d="M5 3.500l3-3.500" stroke="#fff" stroke-width=".8"/></svg>
<div class="t" style="left:25px;top:213px">Allowable values:</div>
<div class="rad" style="left:132px;top:214px"></div>
<div class="t" style="left:155px;top:213px">All</div>
<div class="rad on" style="left:183px;top:214px"></div>
<div class="t" style="left:206px;top:213px">List</div>
<div class="rad" style="left:239px;top:214px;border-color:#c4c4c4"></div>
<div class="t" style="left:262px;top:213px;color:#838383">Range</div>
<!-- list of values -->
<div class="grp" style="left:13px;top:259px;width:534px;height:223px"></div>
<div class="t" style="left:20px;top:250px;background:#f0f0f0;padding:0 3px">List of values</div>
<div class="a" style="left:25px;top:279px;width:348px;height:192px;background:#fff;border:1px solid #6b6b6b;overflow:hidden">
<div class="a" style="left:172px;top:0;width:1px;height:191px;background:#e4e4e4"></div>
<div class="a" style="left:0;top:25px;width:347px;height:1px;background:#ececec"></div>
<div class="a" style="left:0;top:50px;width:347px;height:1px;background:#ececec"></div>
<div class="a" style="left:0;top:75px;width:347px;height:1px;background:#ececec"></div>
<div class="a" style="left:0;top:100px;width:347px;height:1px;background:#ececec"></div>
<div class="a" style="left:0;top:125px;width:347px;height:1px;background:#ececec"></div>
<div class="a" style="left:0;top:150px;width:347px;height:1px;background:#ececec"></div>
<div class="a" style="left:0;top:175px;width:347px;height:1px;background:#ececec"></div>
<div class="t" style="left:7px;top:4px">Value</div><div class="t" style="left:180px;top:4px">Display As</div>
<div class="t" style="left:6px;top:29px">Year</div><div class="t" style="left:179px;top:29px;color:#7a7a7a">Year</div>
<div class="t" style="left:6px;top:54px">Quarter</div><div class="t" style="left:179px;top:54px;color:#7a7a7a">Quarter</div>
<div class="t" style="left:6px;top:79px">Month</div><div class="t" style="left:179px;top:79px;color:#7a7a7a">Month</div>
<div class="t" style="left:6px;top:104px;color:#8a8a8a">Add</div>
</div>
<div class="btn dis" style="left:387px;top:280px;width:147px;height:26px;line-height:26px;text-align:left;padding-left:6px">Add from Parameter</div>
<svg style="left:522px;top:289px" width="5" height="9" viewBox="0 0 5 9"><path d="M.5 .5v8l4-4z" fill="#a6a6a6"/><path d="M1 8.500l3.500-4" stroke="#fff" stroke-width=".8"/></svg>
<div class="btn" style="left:387px;top:315px;width:147px;height:26px;line-height:26px;padding-right:18px">Add from Field</div>
<svg style="left:522px;top:324px" width="5" height="9" viewBox="0 0 5 9"><path d="M.5 .5v8l4-4z" fill="#000"/></svg>
<div class="btn" style="left:387px;top:350px;width:147px;height:26px;line-height:26px">Paste from Clipboard</div>
<div class="btn" style="left:387px;top:414px;width:147px;height:26px;line-height:26px">Clear All</div>
<div class="btn" style="left:355px;top:491px;width:91px;height:26px;line-height:24px;border:2px solid #0078d7">OK</div>
<div class="btn" style="left:455px;top:491px;width:91px;height:26px;line-height:26px">Cancel</div>
</div>
<!--/DIALOG-->
<!--EDGE-->
<svg style="left:1624px;top:5px" width="132" height="16" viewBox="1624 5 132 16" fill="none" stroke="#777" stroke-width="1"><path d="M1625 11.500h13"/><rect x="1683.500" y="6.500" width="11" height="11"/><path d="M1742 6l12 12M1754 6l-12 12" stroke="#707070" stroke-width="1.100"/></svg>
<div class="a" style="left:1778px;top:0;width:3px;height:842px;background:#c8c8c8;border-left:1px solid #a0a0a0"></div>
<div class="a" style="left:1778px;top:0;width:3px;height:14px;background:#111"></div>
<!--/EDGE-->
</body>
</html>
